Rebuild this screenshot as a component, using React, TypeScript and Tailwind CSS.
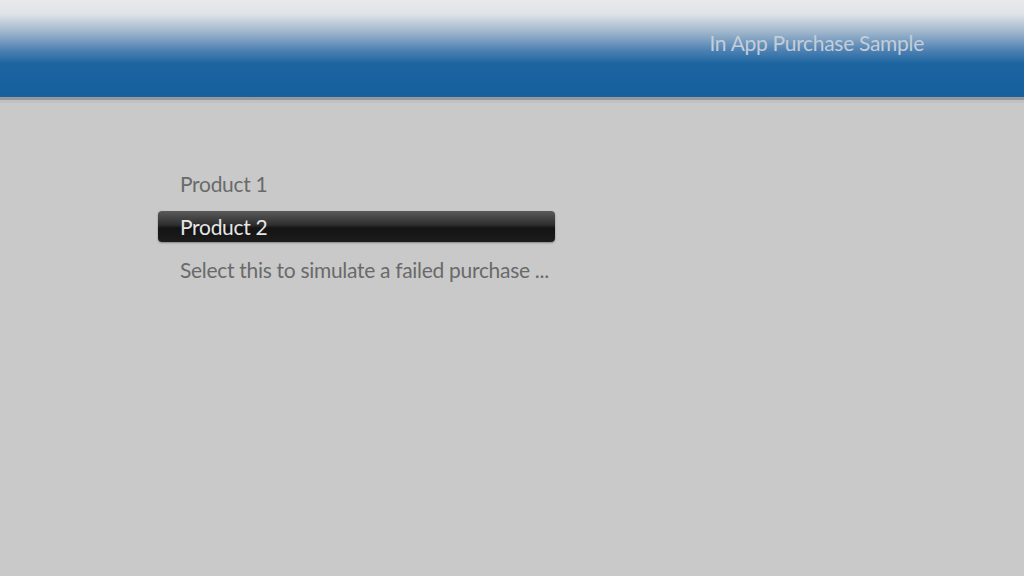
import React from "react";

const items = [
  "Product 1",
  "Product 2",
  "Select this to simulate a failed purchase ...",
];

export default function App() {
  const selected = 1;

  return (
    <div
      className="w-[1024px] h-[576px] flex flex-col bg-[#c9c9c9] overflow-hidden"
      style={{ fontFamily: "Lato, 'Open Sans', sans-serif" }}
    >
      {/* header */}
      <div className="h-[97px] shrink-0 flex justify-end bg-[linear-gradient(to_bottom,#e9eaec_0px,#dfe3e8_14px,#9fb6cc_32px,#4f82b3_50px,#1b64a0_64px,#16609e_97px)]">
        <div className="mr-[100px] pt-[30px] text-[21px] leading-[26px] text-[#c3cdd8] tracking-[-0.3px]">
          In App Purchase Sample
        </div>
      </div>
      <div className="h-[3px] shrink-0 bg-[#96989c]" />
      <div className="h-[3px] shrink-0 bg-[#bfc1c3]" />

      {/* list */}
      <div className="pl-[158px] pt-[65px] flex flex-col gap-[12px]">
        {items.map((label, i) => (
          <div
            key={i}
            className={
              i === selected
                ? "w-[397px] h-[31px] flex items-center pl-[22px] rounded-[4px] bg-[linear-gradient(to_bottom,#5a5a5a_0%,#2e2e2e_45%,#141414_55%,#1c1c1c_100%)] shadow-[0_1px_2px_rgba(0,0,0,0.35)] text-[#e6e6e6] text-[21px] tracking-[-0.3px]"
                : "w-[397px] h-[31px] flex items-center pl-[22px] text-[#6a6a6a] text-[21px] tracking-[-0.3px]"
            }
          >
            {label}
          </div>
        ))}
      </div>
    </div>
  );
}
